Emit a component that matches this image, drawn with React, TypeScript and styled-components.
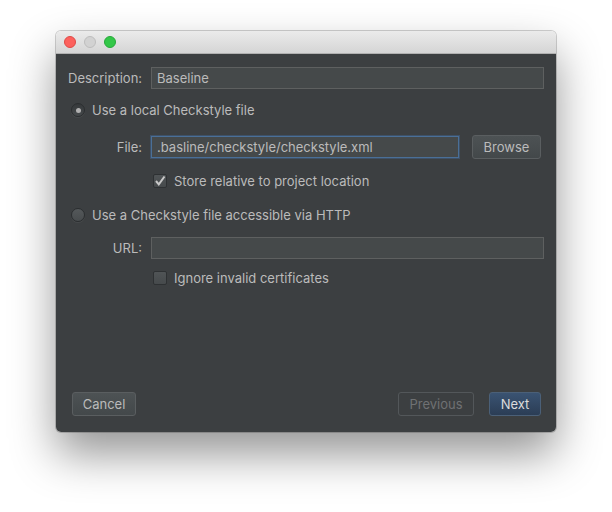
import React from 'react';
import styled, { createGlobalStyle } from 'styled-components';

const GlobalStyle = createGlobalStyle`
  html, body {
    margin: 0;
    padding: 0;
    background: #ffffff;
  }
  body {
    font-family: Inter, "Liberation Sans", Arial, sans-serif;
    font-size: 13px;
  }
`;

const Page = styled.div`
  width: 612px;
  height: 512px;
  padding: 31px 0 0 56px;
  box-sizing: border-box;
`;

const Window = styled.div`
  width: 500px;
  height: 401px;
  border-radius: 5px;
  overflow: hidden;
  display: flex;
  flex-direction: column;
  box-shadow: 0 22px 45px rgba(0, 0, 0, 0.42), 0 0 0 1px rgba(0, 0, 0, 0.18);
`;

const TitleBar = styled.div`
  height: 22px;
  flex-shrink: 0;
  display: flex;
  align-items: center;
  gap: 8px;
  padding-left: 8px;
  background: linear-gradient(#ebebeb, #d5d5d5);
  border-bottom: 1px solid #b1b1b1;
`;

const Light = styled.span<{ $fill: string; $edge: string }>`
  width: 12px;
  height: 12px;
  border-radius: 50%;
  box-sizing: border-box;
  background: ${p => p.$fill};
  border: 1px solid ${p => p.$edge};
`;

const Content = styled.div`
  flex: 1;
  background: #3c3f41;
  color: #bbbbbb;
  display: flex;
  flex-direction: column;
  padding: 0 12px 16px 12px;
`;

const Row = styled.div<{ $top: number; $h?: number }>`
  display: flex;
  align-items: center;
  margin-top: ${p => p.$top}px;
  height: ${p => p.$h ?? 22}px;
`;

const Label = styled.label<{ $align?: string }>`
  width: 74px;
  flex-shrink: 0;
  margin-right: 9px;
  text-align: ${p => p.$align ?? 'right'};
  white-space: nowrap;
`;

const Indent = styled.div`
  width: 83px;
  flex-shrink: 0;
`;

const TextField = styled.div<{ $focus?: boolean }>`
  flex: 1;
  height: 22px;
  box-sizing: border-box;
  display: flex;
  align-items: center;
  padding: 0 5px;
  background: #45494a;
  border: 1px solid ${p => (p.$focus ? '#4a6f97' : '#5e6060')};
  box-shadow: ${p => (p.$focus ? '0 0 0 1px rgba(64, 104, 150, 0.45)' : 'none')};
  color: #bbbbbb;
`;

const Button = styled.div<{ $kind?: 'default' | 'primary' | 'disabled'; $w: number }>`
  width: ${p => p.$w}px;
  height: 24px;
  box-sizing: border-box;
  border-radius: 3px;
  display: flex;
  align-items: center;
  justify-content: center;
  flex-shrink: 0;
  color: ${p => (p.$kind === 'disabled' ? '#6f7173' : p.$kind === 'primary' ? '#dcdcdc' : '#bbbbbb')};
  border: 1px solid ${p => (p.$kind === 'disabled' ? '#53575a' : p.$kind === 'primary' ? '#4b6078' : '#5a5e60')};
  background: ${p =>
    p.$kind === 'disabled'
      ? 'transparent'
      : p.$kind === 'primary'
      ? 'linear-gradient(#3a5372, #2b3d55)'
      : 'linear-gradient(#4d5254, #43484a)'};
`;

const Radio = styled.span<{ $checked?: boolean }>`
  width: 14px;
  height: 14px;
  border-radius: 50%;
  box-sizing: border-box;
  margin: 0 7px 0 3px;
  flex-shrink: 0;
  display: flex;
  align-items: center;
  justify-content: center;
  background: ${p => (p.$checked ? 'linear-gradient(#36393b, #45494b)' : 'linear-gradient(#54585a, #484c4e)')};
  border: 1px solid #2b2e30;
  box-shadow: 0 1px 0 rgba(255, 255, 255, 0.06);
  &::after {
    content: '';
    width: 5px;
    height: 5px;
    border-radius: 50%;
    background: #b0b0b0;
    display: ${p => (p.$checked ? 'block' : 'none')};
  }
`;

const Check = styled.span`
  width: 14px;
  height: 14px;
  box-sizing: border-box;
  margin: 0 7px 0 2px;
  flex-shrink: 0;
  border-radius: 2px;
  background: linear-gradient(#505456, #464a4c);
  border: 1px solid #2e3133;
  display: flex;
  align-items: center;
  justify-content: center;
`;

const Footer = styled.div`
  margin-top: auto;
  display: flex;
  align-items: center;
  padding: 0 3px 0 4px;
`;

const Spacer = styled.div`
  flex: 1;
`;

const Gap = styled.div<{ $w: number }>`
  width: ${p => p.$w}px;
  flex-shrink: 0;
`;

const App = () => {
  return (
    <Page>
      <GlobalStyle />
      <Window>
        <TitleBar>
          <Light $fill="#fc615d" $edge="#de4a46" />
          <Light $fill="#d2d2d2" $edge="#bdbdbd" />
          <Light $fill="#33c748" $edge="#27a83a" />
        </TitleBar>
        <Content>
          <Row $top={13}>
            <Label $align="left">Description:</Label>
            <TextField>Baseline</TextField>
          </Row>
          <Row $top={10}>
            <Radio $checked />
            <span>Use a local Checkstyle file</span>
          </Row>
          <Row $top={14} $h={24}>
            <Label>File:</Label>
            <TextField $focus>.basline/checkstyle/checkstyle.xml</TextField>
            <Gap $w={13} />
            <Button $w={69}>Browse</Button>
            <Gap $w={3} />
          </Row>
          <Row $top={11}>
            <Indent />
            <Check>
              <svg width="12" height="12" viewBox="0 0 12 12">
                <path d="M2 6 L4.8 9.3 L10.5 1.5" fill="none" stroke="#c8c8c8" strokeWidth="2" />
              </svg>
            </Check>
            <span>Store relative to project location</span>
          </Row>
          <Row $top={12}>
            <Radio />
            <span>Use a Checkstyle file accessible via HTTP</span>
          </Row>
          <Row $top={11}>
            <Label>URL:</Label>
            <TextField />
          </Row>
          <Row $top={8}>
            <Indent />
            <Check />
            <span>Ignore invalid certificates</span>
          </Row>
          <Footer>
            <Button $w={64}>Cancel</Button>
            <Spacer />
            <Button $w={76} $kind="disabled">Previous</Button>
            <Gap $w={15} />
            <Button $w={52} $kind="primary">Next</Button>
          </Footer>
        </Content>
      </Window>
    </Page>
  );
};

export default App;
